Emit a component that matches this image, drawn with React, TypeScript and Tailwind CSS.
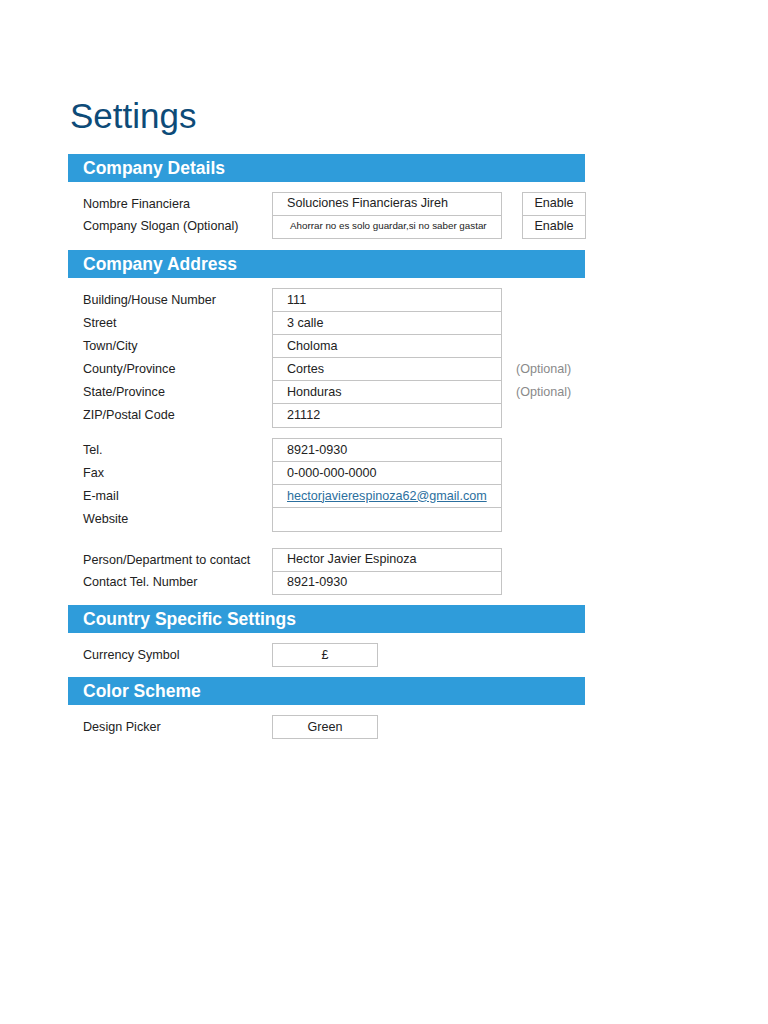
import type { ReactNode } from "react";

const FONT = { fontFamily: '"Liberation Sans", Arial, sans-serif' };

function Banner({ title }: { title: string }) {
  return (
    <div className="flex h-[28px] items-center bg-[#2f9cda] pl-[15px] text-[17.5px] font-bold text-white">
      {title}
    </div>
  );
}

type Field = { label: string; value?: ReactNode; note?: string };

function FieldGroup({ rows, rowH = "h-[23px]" }: { rows: Field[]; rowH?: string }) {
  return (
    <div className="flex">
      <div className="flex w-[204px] shrink-0 flex-col pt-[1px]">
        {rows.map((r) => (
          <div key={r.label} className={`flex ${rowH} items-center pl-[15px] text-[12.6px] text-[#222]`}>
            {r.label}
          </div>
        ))}
      </div>
      <div className="flex w-[230px] shrink-0 flex-col divide-y divide-[#c4c4c4] border border-[#c4c4c4]">
        {rows.map((r) => (
          <div key={r.label} className={`flex ${rowH} items-center pl-[14px] text-[12.6px] text-[#222]`}>
            {r.value}
          </div>
        ))}
      </div>
      <div className="flex flex-col pl-[14px] pt-[1px]">
        {rows.map((r) => (
          <div key={r.label} className={`flex ${rowH} items-center text-[12.6px] text-[#8a8a8a]`}>
            {r.note}
          </div>
        ))}
      </div>
    </div>
  );
}

function SmallField({ label, value }: { label: string; value: string }) {
  return (
    <div className="flex">
      <div className="flex h-[24px] w-[204px] shrink-0 items-center pl-[15px] text-[12.6px] text-[#222]">{label}</div>
      <div className="flex h-[24px] w-[106px] items-center justify-center border border-[#c4c4c4] text-[12.6px] text-[#222]">
        {value}
      </div>
    </div>
  );
}

export default function App() {
  return (
    <div className="min-h-[1024px] bg-white" style={FONT}>
      <div className="ml-[68px] w-[517px] pt-[94px]">
        <h1 className="pl-[2px] text-[35px] leading-[44px] text-[#0d4b78]">Settings</h1>

        <div className="mt-[16px]">
          <Banner title="Company Details" />
        </div>
        <div className="mt-[10px] flex">
          <div className="flex w-[204px] shrink-0 flex-col pt-[1px]">
            <div className="flex h-[22.5px] items-center pl-[15px] text-[12.6px] text-[#222]">Nombre Financiera</div>
            <div className="flex h-[22.5px] items-center pl-[15px] text-[12.6px] text-[#222]">
              Company Slogan (Optional)
            </div>
          </div>
          <div className="flex w-[230px] shrink-0 flex-col divide-y divide-[#c4c4c4] border border-[#c4c4c4]">
            <div className="flex h-[22.5px] items-center pl-[14px] text-[12.6px] text-[#222]">
              Soluciones Financieras Jireh
            </div>
            <div className="flex h-[22.5px] items-center whitespace-nowrap pl-[17px] text-[9.8px] text-[#222]">
              Ahorrar no es solo guardar,si no saber gastar
            </div>
          </div>
          <div className="ml-[20px] flex w-[64px] shrink-0 flex-col divide-y divide-[#c4c4c4] border border-[#c4c4c4]">
            <div className="flex h-[22.5px] items-center justify-center text-[12.6px] text-[#222]">Enable</div>
            <div className="flex h-[22.5px] items-center justify-center text-[12.6px] text-[#222]">Enable</div>
          </div>
        </div>

        <div className="mt-[11px]">
          <Banner title="Company Address" />
        </div>
        <div className="mt-[10px]">
          <FieldGroup
            rows={[
              { label: "Building/House Number", value: "111" },
              { label: "Street", value: "3 calle" },
              { label: "Town/City", value: "Choloma" },
              { label: "County/Province", value: "Cortes", note: "(Optional)" },
              { label: "State/Province", value: "Honduras", note: "(Optional)" },
              { label: "ZIP/Postal Code", value: "21112" },
            ]}
          />
        </div>
        <div className="mt-[10px]">
          <FieldGroup
            rows={[
              { label: "Tel.", value: "8921-0930" },
              { label: "Fax", value: "0-000-000-0000" },
              {
                label: "E-mail",
                value: <span className="text-[#2b6f9e] underline">hectorjavierespinoza62@gmail.com</span>,
              },
              { label: "Website", value: "" },
            ]}
          />
        </div>
        <div className="mt-[16px]">
          <FieldGroup
            rowH="h-[22.5px]"
            rows={[
              { label: "Person/Department to contact", value: "Hector Javier Espinoza" },
              { label: "Contact Tel. Number", value: "8921-0930" },
            ]}
          />
        </div>

        <div className="mt-[10px]">
          <Banner title="Country Specific Settings" />
        </div>
        <div className="mt-[10px]">
          <SmallField label="Currency Symbol" value="£" />
        </div>

        <div className="mt-[10px]">
          <Banner title="Color Scheme" />
        </div>
        <div className="mt-[10px]">
          <SmallField label="Design Picker" value="Green" />
        </div>
      </div>
    </div>
  );
}
